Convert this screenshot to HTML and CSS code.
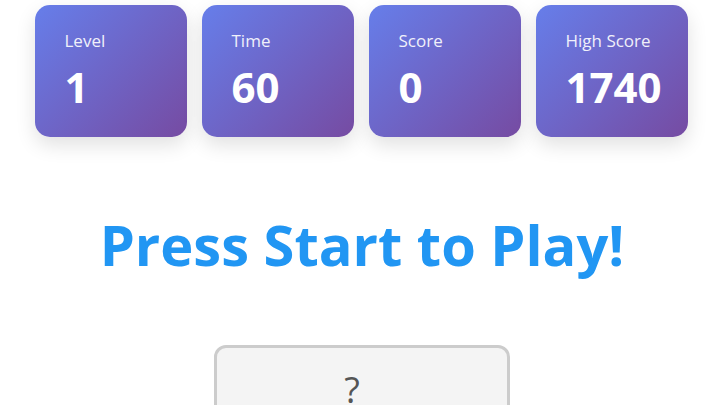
FILE: index.html
```html
<!DOCTYPE html>
<html>
	<head>
		<meta charset="UTF-8">
		<title>Memory Game</title>
		<link rel="stylesheet" href="styles.css">
	</head>
	<body>
		<div id="stats">
			<div class="stat">
				<p class="label">Level</p>
				<p class="value">1</p>
			</div>
			<div class="stat">
				<p class="label">Time</p>
				<p class="value">60</p>
			</div>
			<div class="stat">
				<p class="label">Score</p>
				<p class="value">0</p>
			</div>
			<div class="stat">
				<p class="label">High Score</p>
				<p class="value">1740</p>
			</div>
		</div>
		<h1 id="message">Press Start to Play!</h1>
		<div id="board">
			<div class="card">?</div>
		</div>
	</body>
</html>
```

FILE: styles.css
```css
*{
	margin:0;
	padding:0;
	box-sizing:border-box;
}
html,body{
	height:100%;
}
body{
	font-family:"Open Sans","Noto Sans",sans-serif;
	background:#fff;
	overflow:hidden;
}
#stats{
	display:flex;
	justify-content:center;
	gap:15px;
	padding-top:5px;
	padding-left:2px;
}
.stat{
	width:152px;
	height:132px;
	padding:24px 0 0 30px;
	border-radius:15px;
	color:white;
	background:linear-gradient(135deg,#667eea 0%,#764ba2 100%);
	box-shadow:0 8px 20px rgba(0,0,0,0.12);
}
.label{
	font-size:17px;
	opacity:0.9;
	line-height:24px;
}
.value{
	font-size:42px;
	font-weight:bold;
	line-height:56px;
	margin-top:6px;
}
#message{
	margin-top:69px;
	text-align:center;
	font-size:56px;
	line-height:76px;
	font-weight:bold;
	color:#2196F3;
	padding-left:4px;
}
#board{
	display:flex;
	justify-content:center;
	margin-top:63px;
	padding-left:4px;
}
.card{
	width:296px;
	height:100px;
	border:3px solid #ccc;
	border-radius:12px;
	background:#f4f4f4;
	color:#555;
	font-size:36px;
	line-height:40px;
	text-align:center;
	padding:22px 20px 0 0;
}
```
